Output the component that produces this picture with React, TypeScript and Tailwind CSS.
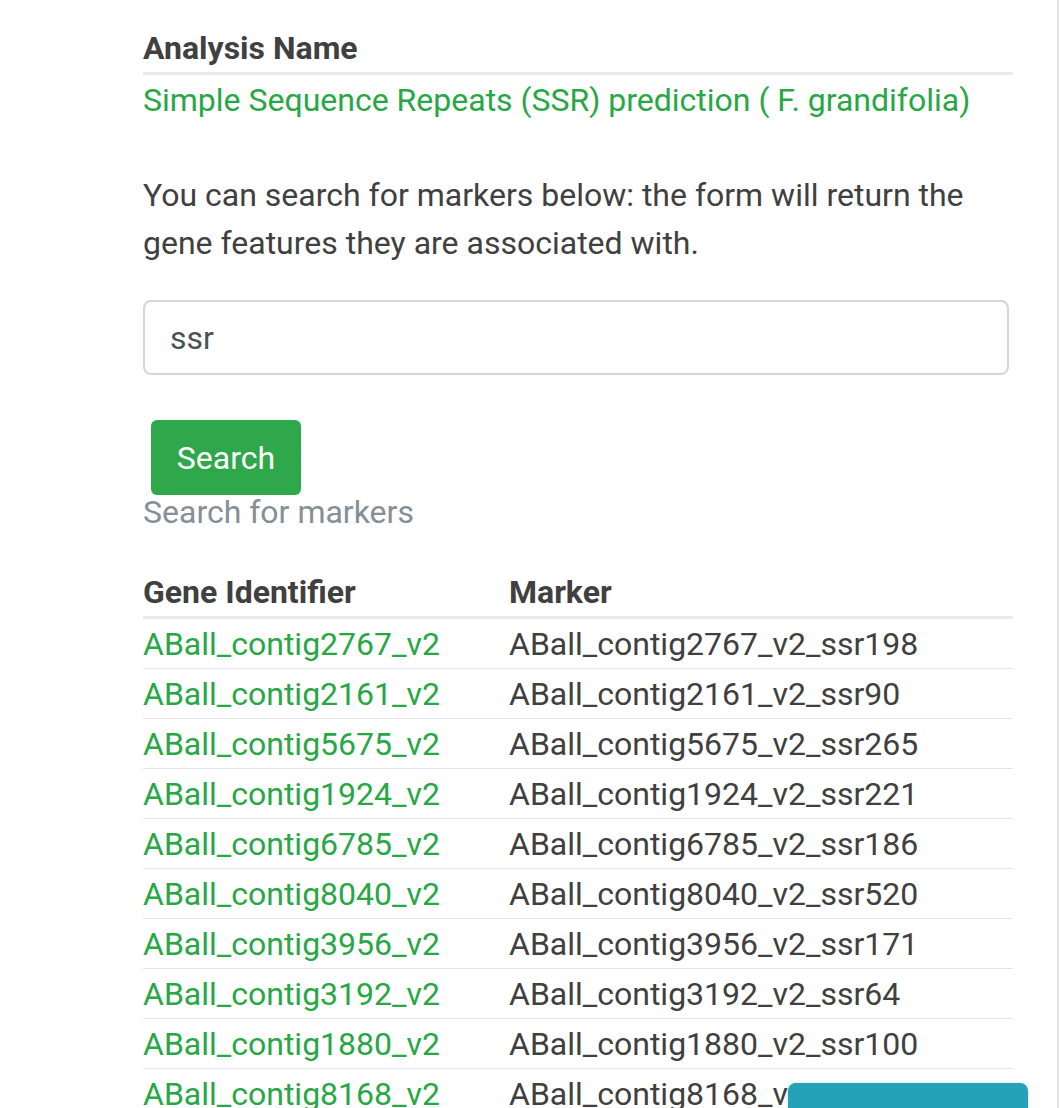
import React from 'react'

const rows: [string, string][] = [
  ['ABall_contig2767_v2', 'ABall_contig2767_v2_ssr198'],
  ['ABall_contig2161_v2', 'ABall_contig2161_v2_ssr90'],
  ['ABall_contig5675_v2', 'ABall_contig5675_v2_ssr265'],
  ['ABall_contig1924_v2', 'ABall_contig1924_v2_ssr221'],
  ['ABall_contig6785_v2', 'ABall_contig6785_v2_ssr186'],
  ['ABall_contig8040_v2', 'ABall_contig8040_v2_ssr520'],
  ['ABall_contig3956_v2', 'ABall_contig3956_v2_ssr171'],
  ['ABall_contig3192_v2', 'ABall_contig3192_v2_ssr64'],
  ['ABall_contig1880_v2', 'ABall_contig1880_v2_ssr100'],
  ['ABall_contig8168_v2', 'ABall_contig8168_v2_ssr239'],
]

export default function App() {
  return (
    <div className="h-[1108px] overflow-hidden bg-white font-['Roboto','Liberation_Sans',sans-serif] text-[32px] text-[#404040]">
      <div className="w-[1059px] h-full border-r-2 border-[#e4e4e4]">
        <div className="ml-[143px] w-[870px] pt-[27px]">
          {/* Analysis name */}
          <div className="font-bold leading-[42px] pb-[3px] border-b-[3px] border-[#e9ecef]">Analysis Name</div>
          <div className="pt-[4px] leading-[42px] text-[#28a745]">
            Simple Sequence Repeats (SSR) prediction ( F. grandifolia)
          </div>

          {/* Intro */}
          <p className="mt-[50px] leading-[48px] pr-[30px]">
            You can search for markers below: the form will return the gene features they are associated with.
          </p>

          {/* Search form */}
          <div className="mt-[33px] w-[866px] h-[75px] border-2 border-[#d6d6d6] rounded-[8px] flex items-center px-[25px] text-[#495057]">
            ssr
          </div>
          <button className="mt-[45px] ml-[8px] w-[150px] h-[75px] rounded-[6px] bg-[#2ea84b] text-white flex items-center justify-center">
            Search
          </button>
          <div className="leading-[34px] text-[#868e96]">Search for markers</div>

          {/* Results */}
          <div className="mt-[42px]">
            <div className="flex font-bold leading-[42px] pb-[3px] border-b-[3px] border-[#e9ecef]">
              <div className="w-[366px]">Gene Identifier</div>
              <div>Marker</div>
            </div>
            {rows.map(([gene, marker]) => (
              <div key={gene} className="flex h-[50px] items-center border-b border-[#e3e6ea]">
                <div className="w-[366px] text-[#28a745]">{gene}</div>
                <div>{marker}</div>
              </div>
            ))}
          </div>
        </div>
      </div>

      {/* Floating feedback tab */}
      <div className="fixed left-[788px] top-[1083px] w-[240px] h-[60px] rounded-t-[8px] bg-[#23a2b8] shadow-[0_0_4px_rgba(0,0,0,0.15)]" />
    </div>
  )
}
